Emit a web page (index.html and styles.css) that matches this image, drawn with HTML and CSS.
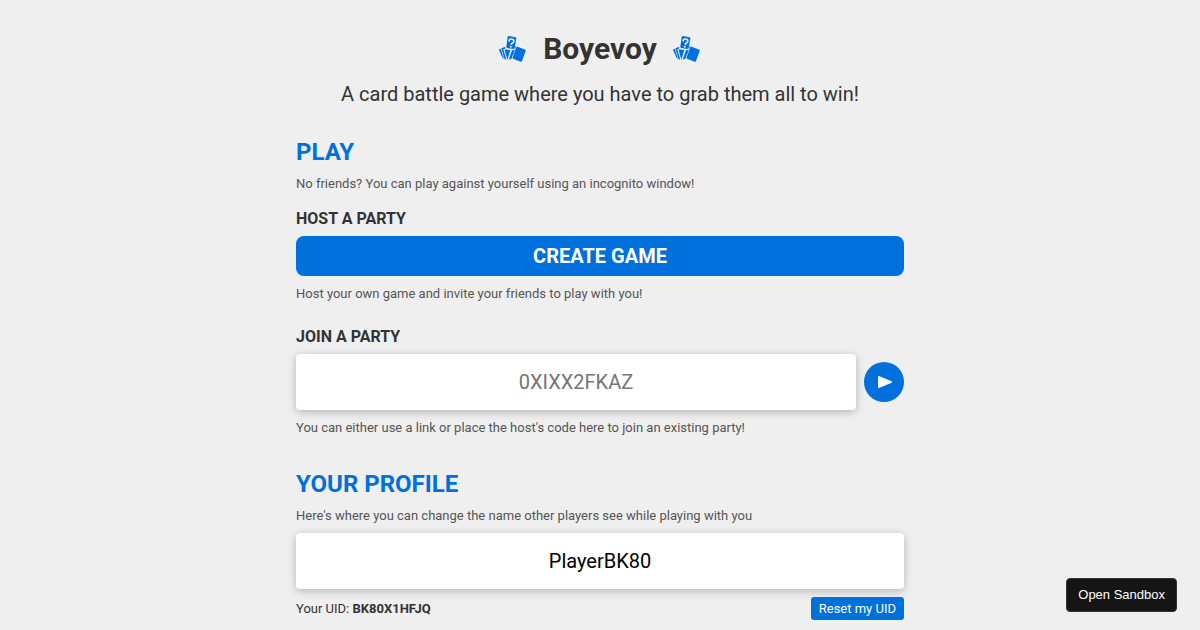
FILE: index.html
```html
<!DOCTYPE html>
<html lang="en">
<head>
<meta charset="utf-8">
<meta name="viewport" content="width=device-width, initial-scale=1">
<title>Boyevoy</title>
<link rel="stylesheet" href="styles.css">
</head>
<body>
<svg class="sprite" aria-hidden="true">
  <symbol id="cards" viewBox="30 30 84 84">
    <path d="M56 35Q57 33 59 33L80 37Q82 38 82 40L77 70Q76 72 74 72L54 69Q52 68 52 66Z"/>
    <path class="mark" d="M60 49Q61 41 68 42Q76 44 74 50Q73 54 68 55L67 60M66 63L65 68"/>
    <path d="M86 65L109 74Q111 75 110 78L99 108Q98 111 95 110L72 101Q70 100 71 97L82 67Q83 64 86 65Z"/>
    <path d="M30 75Q30 73 32 72L35 71L45 101L41 99Z"/>
    <path d="M37 70L49 65L48 71L43 73L52 104L47 103Z"/>
    <path d="M47 75L50 73L64 76L55 104Z"/>
    <path d="M69 76L77 75L79 65L82 64L67 101L59 104Z"/>
  </symbol>
</svg>
<main class="page">
  <header class="hero">
    <h1 class="title">
      <svg class="logo" aria-hidden="true"><use href="#cards"/></svg>
      <span>Boyevoy</span>
      <svg class="logo" aria-hidden="true"><use href="#cards"/></svg>
    </h1>
    <p class="tagline">A card battle game where you have to grab them all to win!</p>
  </header>

  <section class="section">
    <h2 class="heading">PLAY</h2>
    <p class="hint">No friends? You can play against yourself using an incognito window!</p>
    <div class="group">
      <h3 class="subheading">HOST A PARTY</h3>
      <button class="create" type="button">CREATE GAME</button>
      <p class="hint">Host your own game and invite your friends to play with you!</p>
    </div>
    <form class="group join">
      <label class="subheading" for="code">JOIN A PARTY</label>
      <div class="join-row">
        <input class="field" id="code" type="text" placeholder="0XIXX2FKAZ">
        <button class="go" type="button" aria-label="Join">
          <svg class="go-icon" viewBox="0 0 14 12" aria-hidden="true"><path d="M1 0L13 5Q15 6 13 7L1 12Q0 12 0 11V1Q0 0 1 0Z"/></svg>
        </button>
      </div>
      <p class="hint">You can either use a link or place the host's code here to join an existing party!</p>
    </form>
  </section>

  <section class="section profile">
    <h2 class="heading">YOUR PROFILE</h2>
    <label class="hint" for="name">Here's where you can change the name other players see while playing with you</label>
    <input class="field" id="name" type="text" value="PlayerBK80">
    <div class="uid-row">
      <p class="uid">Your UID: <strong>BK80X1HFJQ</strong></p>
      <button class="reset" type="button">Reset my UID</button>
    </div>
  </section>
</main>
<button class="sandbox" type="button">Open Sandbox</button>
</body>
</html>
```
FILE: styles.css
```css
* { box-sizing: border-box; }
html { overflow: hidden; }
body {
  margin: 0;
  background: #efefef;
  color: #333;
  font-family: Roboto, sans-serif;
}
h1, h2, h3, p { margin: 0; }
button, input { font-family: inherit; border: 0; }
button { cursor: pointer; }
.sprite { position: absolute; width: 0; height: 0; }
.page { max-width: 640px; margin: 0 auto; padding: 32px 16px 10px; }
.hero { text-align: center; }
.title {
  display: flex;
  justify-content: center;
  align-items: center;
  gap: 16px;
  font-size: 30px;
  line-height: 34px;
}
.logo { width: 28px; height: 28px; fill: #0070dd; }
.mark { fill: none; stroke: #efefef; stroke-width: 5; }
.tagline { margin-top: 16px; font-size: 20px; line-height: 24px; }
.section { display: flex; flex-direction: column; margin-top: 32px; }
.heading { color: #0070dd; font-size: 24px; line-height: 28px; }
.hint { display: block; margin-top: 10px; color: #555; font-size: 13px; line-height: 16px; }
.group { display: flex; flex-direction: column; margin-top: 16px; }
.join { margin-top: 24px; }
.subheading { font-size: 16px; font-weight: 700; line-height: 22px; }
.create {
  height: 40px;
  margin-top: 6px;
  border-radius: 8px;
  background: #0070dd;
  color: #fff;
  font-size: 20px;
  font-weight: 700;
}
.join-row { display: flex; align-items: center; gap: 8px; margin-top: 6px; }
.field {
  width: 100%;
  height: 56px;
  padding: 0 16px;
  border-radius: 4px;
  background: #fff;
  box-shadow: 0 2px 8px rgba(0, 0, 0, 0.25);
  color: #000;
  font-size: 20px;
  text-align: center;
}
.field::placeholder { color: #757575; }
.go {
  display: flex;
  flex: none;
  align-items: center;
  justify-content: center;
  width: 40px;
  height: 40px;
  padding: 0 0 0 2px;
  border-radius: 50%;
  background: #0070dd;
}
.go-icon { width: 14px; height: 12px; fill: #fff; }
.profile { margin-top: 34px; }
.profile .field { margin-top: 9px; }
.uid-row { display: flex; align-items: center; justify-content: space-between; margin-top: 8px; }
.uid { font-size: 13px; line-height: 16px; }
.reset {
  padding: 4px 8px;
  border-radius: 3px;
  background: #0070dd;
  color: #fff;
  font-size: 13px;
  line-height: 15px;
}
.sandbox {
  position: fixed;
  right: 23px;
  bottom: 18px;
  height: 34px;
  padding: 0 11px 2px;
  border: 1px solid #343434;
  border-radius: 4px;
  background: #151515;
  color: #fff;
  font-family: "Liberation Sans", Arial, sans-serif;
  font-size: 13px;
}
```
